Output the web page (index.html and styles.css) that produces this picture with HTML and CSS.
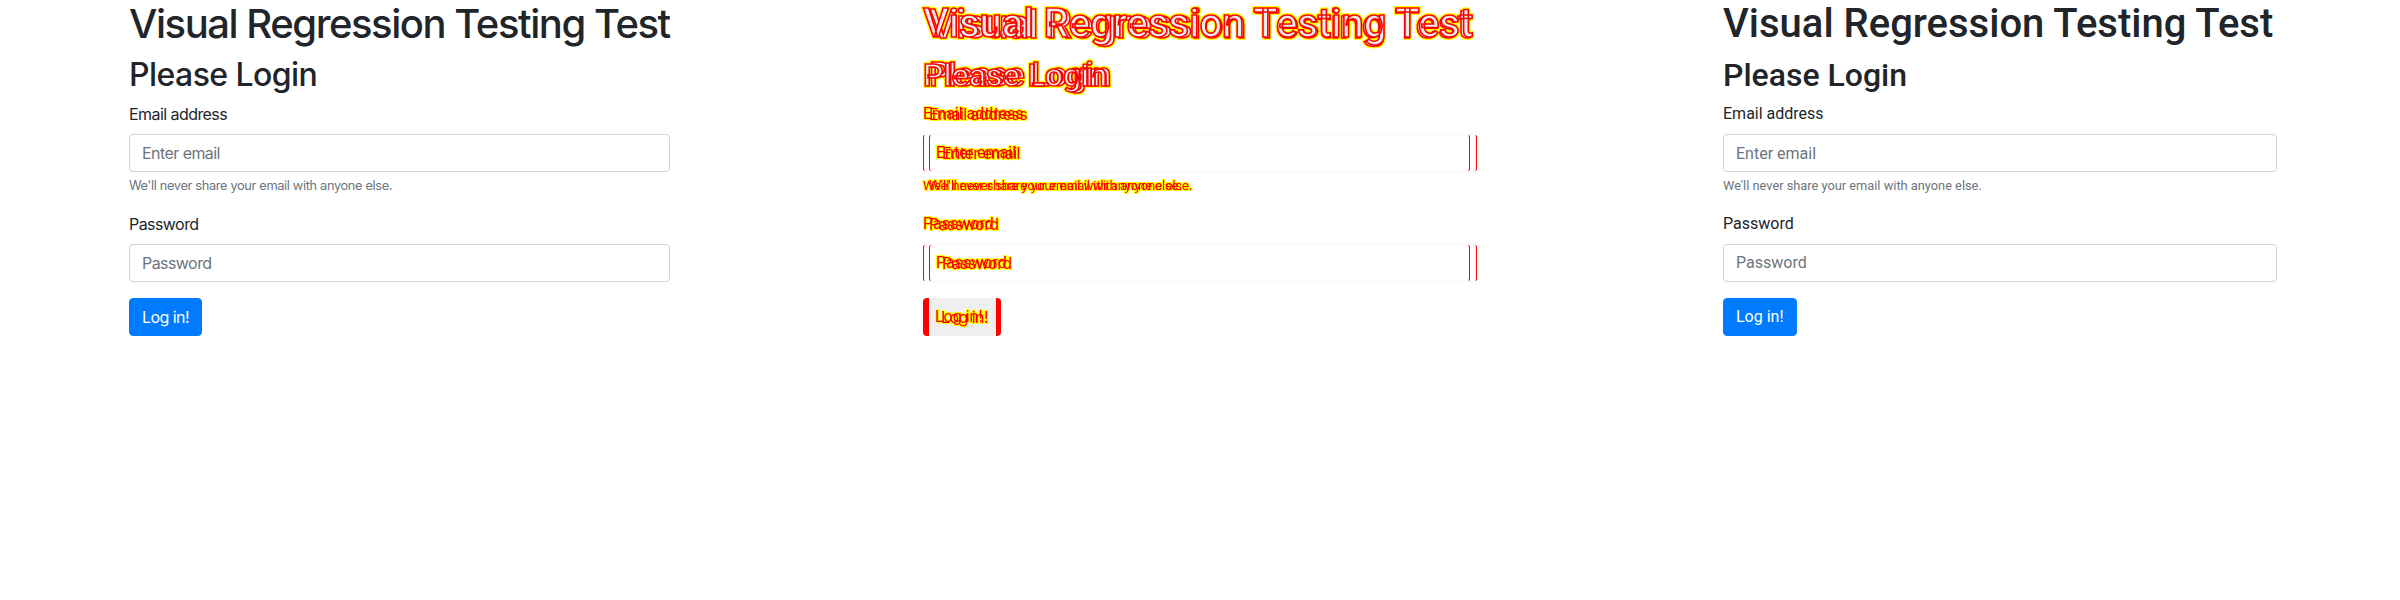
FILE: index.html
```html
<!DOCTYPE html>
<html lang="en">
<head>
<meta charset="utf-8">
<title>Visual Regression Testing Test</title>
<link rel="stylesheet" href="styles.css">
</head>
<body>
<main class="compare">
  <section class="panel panel-ref">
    <form class="login login-ref">
      <h1 class="title">Visual Regression Testing Test</h1>
      <h2 class="subtitle">Please Login</h2>
      <div class="form-group">
        <label class="label">Email address</label>
        <input class="field" type="email" placeholder="Enter email">
        <small class="help">We'll never share your email with anyone else.</small>
      </div>
      <div class="form-group">
        <label class="label">Password</label>
        <input class="field" type="password" placeholder="Password">
      </div>
      <button class="btn" type="button">Log in!</button>
    </form>
  </section>

  <section class="panel panel-diff">
    <div class="diff">
      <div class="dual title"><span class="a">Visual Regression Testing Test</span><span class="b">Visual Regression Testing Test</span></div>
      <div class="dual subtitle"><span class="a">Please Login</span><span class="b">Please Login</span></div>
      <div class="form-group">
        <div class="dual label"><span class="a">Email address</span><span class="b">Email address</span></div>
        <div class="diff-field">
          <div class="box box-a"></div>
          <div class="box box-b"></div>
          <div class="dual ph"><span class="a">Enter email</span><span class="b">Enter email</span></div>
        </div>
        <div class="dual help"><span class="a">We'll never share your email with anyone else.</span><span class="b">We'll never share your email with anyone else.</span></div>
      </div>
      <div class="form-group">
        <div class="dual label"><span class="a">Password</span><span class="b">Password</span></div>
        <div class="diff-field">
          <div class="box box-a"></div>
          <div class="box box-b"></div>
          <div class="dual ph"><span class="a">Password</span><span class="b">Password</span></div>
        </div>
      </div>
      <div class="diff-btn">
        <div class="dual btn-text"><span class="a">Log in!</span><span class="b">Log in!</span></div>
      </div>
    </div>
  </section>

  <section class="panel panel-test">
    <form class="login login-test">
      <h1 class="title">Visual Regression Testing Test</h1>
      <h2 class="subtitle">Please Login</h2>
      <div class="form-group">
        <label class="label">Email address</label>
        <input class="field" type="email" placeholder="Enter email">
        <small class="help">We'll never share your email with anyone else.</small>
      </div>
      <div class="form-group">
        <label class="label">Password</label>
        <input class="field" type="password" placeholder="Password">
      </div>
      <button class="btn" type="button">Log in!</button>
    </form>
  </section>
</main>
</body>
</html>
```

FILE: styles.css
```css
* { box-sizing: border-box; }

html, body {
  margin: 0;
  padding: 0;
  background: #ffffff;
}

body {
  width: 2400px;
  height: 600px;
  overflow: hidden;
  color: #212529;
  font-size: 16px;
  line-height: 1.5;
}

.compare {
  display: flex;
  align-items: flex-start;
}

.panel {
  flex: none;
  width: 800px;
}

.panel-ref { padding-left: 129px; }
.panel-diff { padding-left: 123px; }
.panel-test { padding-left: 123px; }

/* ---------- shared form metrics (Bootstrap-like) ---------- */
.login { margin: 0; }
.login-ref {
  width: 541px;
  font-family: Inter, "Noto Sans", sans-serif;
  letter-spacing: -0.035em;
}
.login-test {
  width: 554px;
  font-family: Roboto, "Liberation Sans", sans-serif;
}

.title {
  margin: 0 0 8px;
  font-size: 40px;
  font-weight: 500;
  line-height: 1.2;
  white-space: nowrap;
}

.subtitle {
  margin: 0 0 8px;
  font-size: 32px;
  font-weight: 500;
  line-height: 1.2;
  white-space: nowrap;
}

.form-group { margin-bottom: 16px; }

.label {
  display: block;
  margin-bottom: 8px;
  font-size: 16px;
  line-height: 24px;
  font-weight: 400;
  white-space: nowrap;
}

.field {
  display: block;
  width: 100%;
  height: 38px;
  margin: 0;
  padding: 6px 12px;
  font: inherit;
  font-size: 16px;
  line-height: 1.5;
  letter-spacing: inherit;
  color: #495057;
  background: #ffffff;
  border: 1px solid #ced4da;
  border-radius: 4px;
  outline: none;
}

.field::placeholder { color: #6c757d; opacity: 1; }

.help {
  display: block;
  margin-top: 4px;
  font-size: 12.8px;
  line-height: 19.2px;
  color: #6c757d;
  white-space: nowrap;
}

.btn {
  display: block;
  margin: 0;
  padding: 6px 12px;
  font: inherit;
  font-size: 16px;
  line-height: 24px;
  letter-spacing: inherit;
  color: #ffffff;
  background: #007bff;
  border: 1px solid #007bff;
  border-radius: 4px;
}

.login-ref .title { letter-spacing: -1.45px; }
.login-ref .help { letter-spacing: -0.027em; }

/* ---------- diff panel ---------- */
.diff { width: 560px; }

.dual {
  display: grid;
  justify-items: start;
  color: #ff0000;
  filter: drop-shadow(1px 0 0 #ffff00) drop-shadow(-1px 0 0 #ffff00) drop-shadow(0 1px 0 #ffff00) drop-shadow(0 -1px 0 #ffff00);
}

.dual > span {
  grid-area: 1 / 1;
  white-space: nowrap;
}

.dual > .a {
  margin-left: 6px;
  font-family: Inter, "Noto Sans", sans-serif;
  letter-spacing: -0.035em;
}
.dual > .b { font-family: Roboto, "Liberation Sans", sans-serif; }

.dual.title > .a { letter-spacing: -1.45px; }
.dual.help > .a { letter-spacing: -0.027em; }

/* large diff glyphs: red edges around a faded grey core */
.dual.title > span,
.dual.subtitle > span {
  color: #ebebeb;
  -webkit-text-stroke: 1.6px #ff0000;
}

.diff-field {
  display: grid;
  height: 38px;
}

.diff-field > * { grid-area: 1 / 1; }

.box {
  height: 38px;
  border-top: 1px solid #f7f7f7;
  border-bottom: 1px solid #f7f7f7;
  border-left: 1px solid #ff0000;
  border-right: 1px solid #ff0000;
  border-radius: 4px;
}

.box-a { margin-left: 6px; width: 541px; }
.box-b { width: 554px; }

.dual.ph {
  align-self: center;
  padding-left: 13px;
  font-size: 16px;
  line-height: 24px;
}

.dual.help {
  margin-top: 4px;
  font-size: 12.8px;
  line-height: 19.2px;
}

.diff-btn {
  width: 78px;
  height: 38px;
  display: flex;
  align-items: center;
  padding-left: 6px;
  background: #efefef;
  border-left: 6px solid #ff0000;
  border-right: 5px solid #ff0000;
  border-radius: 4px;
}

.dual.btn-text {
  font-size: 16px;
  line-height: 24px;
}
```
